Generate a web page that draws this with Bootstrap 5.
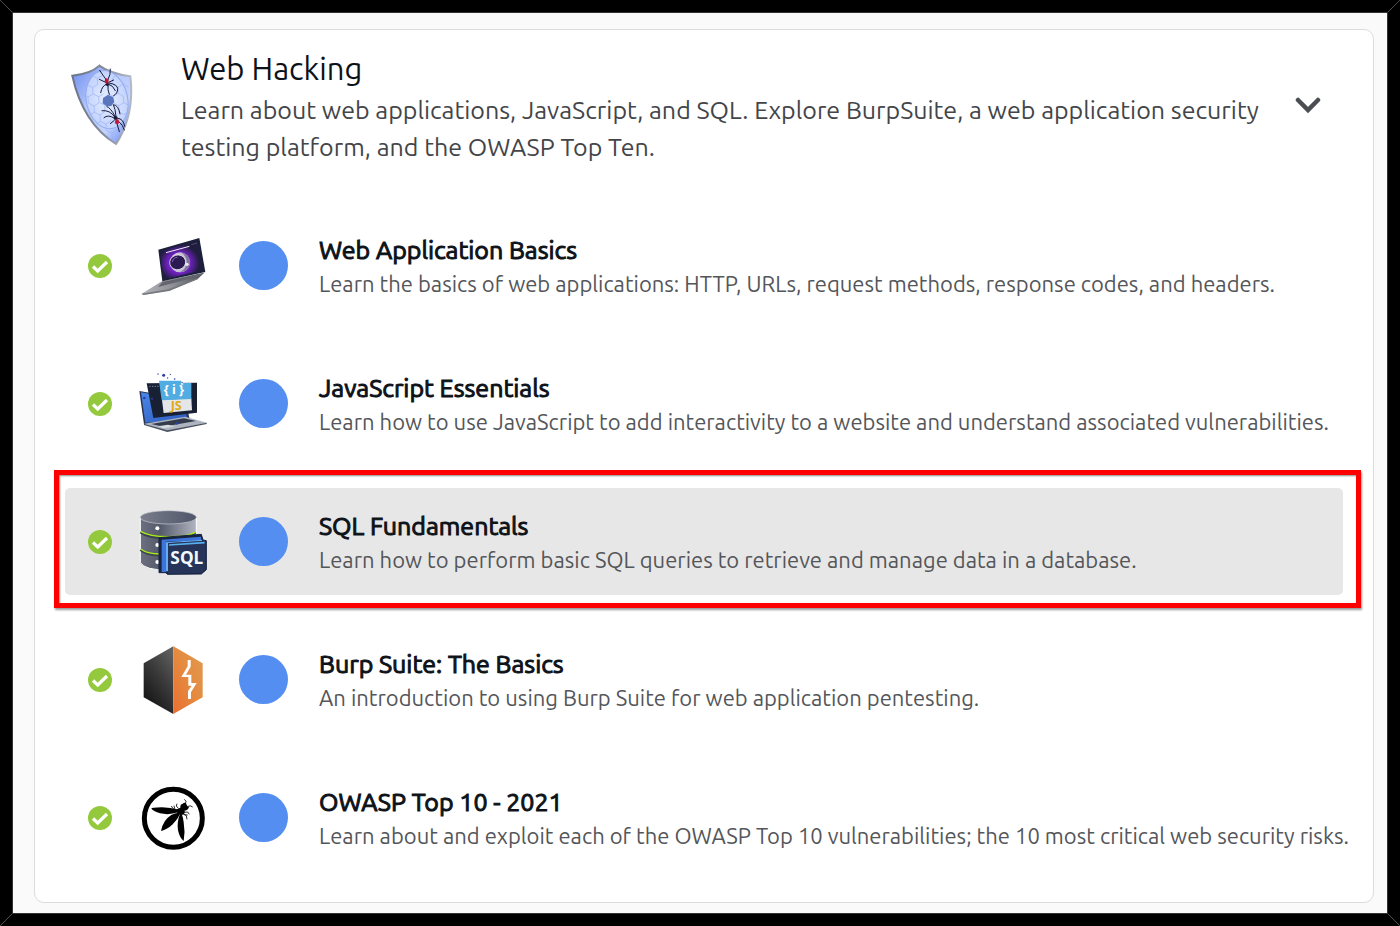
<!DOCTYPE html>
<html lang="en">
<head>
<meta charset="utf-8">
<meta name="viewport" content="width=device-width, initial-scale=1">
<title>Web Hacking</title>
<link href="https://cdn.jsdelivr.net/npm/bootstrap@5.3.0/dist/css/bootstrap.min.css" rel="stylesheet">
<style>
  body { font-family: Ubuntu, "Noto Sans", sans-serif; background: #000; color: #0d1218; }
  .frame {
    min-height: 100vh; padding: 13px;
    --edge: transparent 46%, #4a4a4a 50%, transparent 54%;
    background:
      linear-gradient(to top right, var(--edge)) 0 0 / 13px 13px no-repeat,
      linear-gradient(to top left, var(--edge)) 100% 0 / 13px 13px no-repeat,
      linear-gradient(to top left, var(--edge)) 0 100% / 13px 13px no-repeat,
      linear-gradient(to top right, var(--edge)) 100% 100% / 13px 13px no-repeat,
      #000;
  }
  .frame-page { background: #fafafa; padding: 16px 13px 10px 21px; box-shadow: 0 0 0 1px #333; }
  .module { border: 1px solid #dcdcdc; border-radius: 10px; background: #fff; padding-bottom: 18px; }
  .module-head { padding: 18px 52px 0 35px; }
  .module-shield { width: 64px; height: 82px; margin: 16px 47px 0 0; }
  .module-head h1 { font-size: 31px; line-height: 42px; font-weight: 400; }
  .module-head p { font-size: 25px; line-height: 37px; padding-top: 2px; color: #434549; }
  .toggle { margin: 46px 0 0 34px; line-height: 0; }
  .rooms { margin: 28px 12px 0 19px; }
  .room { border: 5px solid transparent; padding: 13px 0 8px 6px; }
  .room-picked { border-color: #f00; padding-right: 13px; box-shadow: 1px 2px 2px #0006, inset 1px 1px 2px #0007; }
  .room-link { min-height: 107px; padding-left: 23px; border-radius: 5px; color: inherit; }
  .room-link:hover { color: inherit; }
  .room-picked .room-link { background: #e7e7e7; }
  .tick { width: 24px; height: 24px; margin-right: 27px; }
  .room-art { width: 68px; height: 68px; margin-right: 32px; }
  .dot { width: 49px; height: 49px; margin-right: 31px; background: #548ef0; }
  .room-text { padding-top: 2px; }
  .room h2 { font-size: 25px; line-height: 34px; font-weight: 400; -webkit-text-stroke: 1px; }
  .room p { font-size: 22px; line-height: 34px; color: #54565a; }
  svg text { font-family: "Noto Sans", sans-serif; font-weight: 700; }
</style>
</head>
<body>
<svg class="d-none" aria-hidden="true">
  <symbol id="tick" viewBox="0 0 24 24">
    <circle cx="12" cy="12" r="12" fill="#95c93d"/>
    <path d="M5 12.500l4.700 4.500L19 8" fill="none" stroke="#fff" stroke-width="3.200"/>
  </symbol>
</svg>
<div class="frame d-flex flex-column">
  <div class="frame-page flex-grow-1">
    <main class="module">
      <header class="module-head d-flex align-items-start">
        <svg class="module-shield flex-shrink-0" viewBox="30 27 192 246" aria-hidden="true">
          <defs>
            <linearGradient id="sh" x1="0" y1="0" x2="1" y2="1"><stop offset="0" stop-color="#6d8cf0"/><stop offset=".4" stop-color="#b4c8fb"/><stop offset=".7" stop-color="#c3d3fd"/><stop offset="1" stop-color="#5d7ff0"/></linearGradient>
            <radialGradient id="shc"><stop offset="0" stop-color="#e6eeff"/><stop offset="1" stop-color="#c3d3fc"/></radialGradient>
            <linearGradient id="rim"><stop offset="0" stop-color="#6c7488"/><stop offset=".55" stop-color="#858c9c"/><stop offset="1" stop-color="#b4b9c6"/></linearGradient>
          </defs>
          <path d="M37 62Q92 56 118 32Q150 56 211 64Q225 180 168 267Q68 204 37 62Z" fill="url(#sh)" stroke="url(#rim)" stroke-width="6"/>
          <ellipse cx="141" cy="134" rx="62" ry="88" transform="rotate(-12 141 134)" fill="url(#shc)" stroke="#92aaf0" stroke-width="3"/>
          <g fill="none" stroke="#9bb1f4" stroke-width="2">
            <path d="M96 62l16 8 1 18-15 10-17-9v-18zM98 98l1 19-15 9-17-8-1-18 15-11M99 117l17 8 1 18-15 10-17-9-1-18M116 125l14-8M102 153l1 19 17 8 14-10 1-19-16-8M120 180l1 19 17 8 15-10M103 172l-15 8M140 96l18-9 16 10 1 18-15 9-17-8M174 97l15-9 16 8M175 115l15 9 1 19-15 9-16-9-1-19M191 143l15 8M176 152l1 18 15 9 14-8M158 87l-1-18 15-9M112 70l14-8M138 207l1 19 17 8 15-9 1-18-15-9M121 199l-12 8M156 234l1 18"/>
          </g>
          <path d="M144 119l15 7 4 14-9 13-14 1-12-9 1-16z" fill="#5a77bd"/>
          <g fill="none" stroke="#171b38" stroke-width="3" stroke-linecap="round">
            <path d="M140 76Q128 60 119 46M143 76Q153 58 151 42M137 82l-19-9M146 82l15-7M139 88Q126 92 122 113M144 90Q142 105 148 118M147 88Q160 92 166 107M147 84Q172 88 173 101Q173 116 161 122"/>
            <path d="M165 187Q150 164 126 167M166 185Q150 156 141 155M168 184Q166 160 160 149Q176 151 180 177M164 190Q144 177 132 188M163 196l-12 10M170 202l8 28M174 197Q190 210 193 225M173 190Q190 190 194 214"/>
          </g>
          <circle cx="142" cy="88" r="5" fill="#171b38"/><ellipse cx="140" cy="78" rx="6" ry="8" fill="#bd1737"/>
          <circle cx="167" cy="189" r="6" fill="#171b38"/><ellipse cx="171" cy="200" rx="6" ry="8" fill="#c1173a"/>
        </svg>
        <div class="flex-grow-1">
          <h1 class="m-0">Web Hacking</h1>
          <p class="m-0">Learn about web applications, JavaScript, and SQL. Explore BurpSuite, a web application security testing platform, and the OWASP Top Ten.</p>
        </div>
        <button type="button" class="toggle btn border-0 p-0 flex-shrink-0" aria-label="Collapse module">
          <svg width="26" height="22" viewBox="0 0 26 22" aria-hidden="true"><path d="M3 6l10 10L23 6" fill="none" stroke="#4a4d52" stroke-width="4.500" stroke-linecap="round"/></svg>
        </button>
      </header>

      <ul class="rooms list-unstyled mb-0">
        <li class="room">
          <a href="#" class="room-link d-flex align-items-center text-decoration-none">
            <svg class="tick flex-shrink-0" role="img" aria-label="Completed"><use href="#tick"/></svg>
            <svg class="room-art flex-shrink-0" viewBox="27 15 204 204" aria-hidden="true">
              <defs>
                <radialGradient id="glow" cx=".44" cy=".58" r=".55"><stop offset="0" stop-color="#a24bff"/><stop offset=".5" stop-color="#6a20b8"/><stop offset=".85" stop-color="#201d3f"/></radialGradient>
                <linearGradient id="kb"><stop offset="0" stop-color="#b5b6ba"/><stop offset=".5" stop-color="#8e9096"/><stop offset="1" stop-color="#4d4f5c"/></linearGradient>
              </defs>
              <path d="M97 162L223 137L203 156L118 190L40 204L35 200Z" fill="url(#kb)"/>
              <path d="M98 165L220 139L208 148L84 180Z" fill="#62646e"/>
              <path d="M35 200L115 187L203 153L203 157L118 192L40 204Z" fill="#77787d"/>
              <path d="M85 68L208 33L226 135L97 163Z" fill="#1b2039"/>
              <path d="M90 73L203 40L220 130L101 157Z" fill="url(#glow)"/>
              <path d="M108 77L178 58" stroke="#f1eaff" stroke-width="3"/><path d="M184 53l17-5" stroke="#5b5f80" stroke-width="2"/>
              <circle cx="150" cy="106" r="30" fill="#c9bfd9"/>
              <path d="M153 76Q181 82 180 110Q176 132 150 136Q170 125 170 105Q169 86 153 76" fill="#817598"/>
              <ellipse cx="143" cy="106" rx="24" ry="22" fill="#2b1a51" stroke="#fff" stroke-width="2" transform="rotate(-15 143 106)"/>
              <path d="M127 105Q130 91 142 91" fill="none" stroke="#8a60c4" stroke-width="3"/><circle cx="171" cy="112" r="5" fill="#eee8f4"/>
            </svg>
            <span class="dot rounded-circle flex-shrink-0"></span>
            <div class="room-text"><h2 class="m-0">Web Application Basics</h2><p class="m-0">Learn the basics of web applications: HTTP, URLs, request methods, response codes, and headers.</p></div>
          </a>
        </li>

        <li class="room">
          <a href="#" class="room-link d-flex align-items-center text-decoration-none">
            <svg class="tick flex-shrink-0" role="img" aria-label="Completed"><use href="#tick"/></svg>
            <svg class="room-art flex-shrink-0" viewBox="27 18 204 204" aria-hidden="true">
              <defs><linearGradient id="scr" x1="0" y1="0" x2="1" y2="1"><stop offset="0" stop-color="#4a86e8"/><stop offset="1" stop-color="#2c5bbd"/></linearGradient></defs>
              <path d="M28 81L165 105L180 170L42 181Z" fill="#28344f"/>
              <path d="M33 85L160 108L172 166L46 176Z" fill="url(#scr)"/>
              <path d="M42 179L166 158L230 176L112 200Z" fill="#aeb4c0"/>
              <path d="M64 180L162 163L198 171L100 188Z" fill="#343b4d"/>
              <path d="M84 187l30-5 20 5-32 6z" fill="#d7dbe2"/>
              <path d="M42 179L112 199L230 176V180L112 204L42 183Z" fill="#4b5261"/>
              <path d="M50 58L201 56V146L70 162Z" fill="#182033"/>
              <path d="M58 67h4M66 67h4M74 67h4M82 67h4" stroke="#7186a6" stroke-width="3"/>
              <path d="M87 50H153L164 62V104L95 109Z" fill="#51ade1"/>
              <path d="M153 50l11 12h-11z" fill="#dcecf6"/>
              <path d="M96 108L184 103L186 139L101 147Z" fill="#e5e6e8"/>
              <path d="M160 57h24v48l-88 4V104h64z" fill="#51ade1"/>
              <text x="101" y="90" font-size="38" fill="#fff">{ i }</text>
              <text x="122" y="138" font-size="38" fill="#deaa16">JS</text>
              <g fill="#2542a5"><circle cx="101" cy="34" r="4.500"/><circle cx="84" cy="30" r="2"/><circle cx="121" cy="31" r="2"/><circle cx="134" cy="45" r="2.500"/><circle cx="113" cy="42" r="2"/><circle cx="43" cy="102" r="4"/><circle cx="66" cy="104" r="3"/><circle cx="141" cy="178" r="4"/><circle cx="156" cy="55" r="2"/></g>
            </svg>
            <span class="dot rounded-circle flex-shrink-0"></span>
            <div class="room-text"><h2 class="m-0">JavaScript Essentials</h2><p class="m-0">Learn how to use JavaScript to add interactivity to a website and understand associated vulnerabilities.</p></div>
          </a>
        </li>

        <li class="room room-picked">
          <a href="#" class="room-link d-flex align-items-center text-decoration-none">
            <svg class="tick flex-shrink-0" role="img" aria-label="Completed"><use href="#tick"/></svg>
            <svg class="room-art flex-shrink-0" viewBox="27 21 204 204" aria-hidden="true">
              <defs>
                <linearGradient id="cyl"><stop offset="0" stop-color="#6c7080"/><stop offset=".35" stop-color="#555a6b"/><stop offset="1" stop-color="#b2b5c0"/></linearGradient>
                <linearGradient id="lid"><stop offset="0" stop-color="#797d8c"/><stop offset="1" stop-color="#50566a"/></linearGradient>
              </defs>
              <path d="M31 49V185Q45 208 115 207Q185 206 199 180V49Z" fill="url(#cyl)" stroke="#fff" stroke-width="3"/>
              <ellipse cx="115" cy="49" rx="84" ry="20" fill="url(#lid)" stroke="#c9cbd3" stroke-width="2"/>
              <path d="M31 94Q55 112 115 112Q175 112 197 96" fill="none" stroke="#3d424f" stroke-width="6"/>
              <path d="M31 147Q50 163 90 163" fill="none" stroke="#3d424f" stroke-width="6"/>
              <path d="M32 91Q58 107 115 107Q175 107 196 94M32 144Q50 158 90 159" fill="none" stroke="#a7ec16" stroke-width="4"/>
              <g fill="#fff"><circle cx="82" cy="82" r="6"/><circle cx="82" cy="132" r="6"/><circle cx="82" cy="183" r="6"/></g>
              <path d="M87 110L214 100L219 117L229 119V206L214 219L112 220L108 215H87Z" fill="#182541" stroke="#182541" stroke-width="3"/>
              <path d="M95 116L213 107V118L108 122V213H95Z" fill="#3c74da"/>
              <path d="M108 124L216 116V121L114 127V211H108Z" fill="#63aef5"/>
              <path d="M114 126L227 119V205L213 216L114 218Z" fill="#26345a"/>
              <path d="M117 132L224 125" stroke="#58b1ee" stroke-width="5"/>
              <text x="121" y="190" font-size="52" fill="#f0f9ff">SQL</text>
            </svg>
            <span class="dot rounded-circle flex-shrink-0"></span>
            <div class="room-text"><h2 class="m-0">SQL Fundamentals</h2><p class="m-0">Learn how to perform basic SQL queries to retrieve and manage data in a database.</p></div>
          </a>
        </li>

        <li class="room">
          <a href="#" class="room-link d-flex align-items-center text-decoration-none">
            <svg class="tick flex-shrink-0" role="img" aria-label="Completed"><use href="#tick"/></svg>
            <svg class="room-art flex-shrink-0" viewBox="27 21 204 204" aria-hidden="true">
              <defs>
                <linearGradient id="bd" x1="1" y1="0" x2=".4" y2="1"><stop offset="0" stop-color="#666"/><stop offset=".5" stop-color="#3c3c3c"/><stop offset="1" stop-color="#161616"/></linearGradient>
                <linearGradient id="bo" x1="1" y1="0" x2="0" y2="1"><stop offset="0" stop-color="#de9c52"/><stop offset=".5" stop-color="#e58a3f"/><stop offset="1" stop-color="#ea6e30"/></linearGradient>
              </defs>
              <path d="M130 22L41 73V175L130 225Z" fill="url(#bd)"/>
              <path d="M130 22L218 73V175L130 225Z" fill="url(#bo)"/>
              <path d="M173 63H182V83L168 107H184V132H200L183 160V180H174V156L185 140H175V114H154L173 82Z" fill="#fff"/>
            </svg>
            <span class="dot rounded-circle flex-shrink-0"></span>
            <div class="room-text"><h2 class="m-0">Burp Suite: The Basics</h2><p class="m-0">An introduction to using Burp Suite for web application pentesting.</p></div>
          </a>
        </li>

        <li class="room">
          <a href="#" class="room-link d-flex align-items-center text-decoration-none">
            <svg class="tick flex-shrink-0" role="img" aria-label="Completed"><use href="#tick"/></svg>
            <svg class="room-art flex-shrink-0" viewBox="27 17 204 204" aria-hidden="true">
              <circle cx="130" cy="120" r="87" fill="#fff" stroke="#000" stroke-width="15"/>
              <path d="M144 94Q110 82 64 89Q66 98 90 105Q118 111 144 102Z"/>
              <path d="M146 103Q122 104 105 128Q95 143 93 158Q112 154 128 138Q144 122 150 107Z"/>
              <path d="M150 106Q140 132 144 156Q149 179 161 188Q166 160 161 132Q159 116 155 106Z"/>
              <path d="M140 93L151 88Q150 78 158 76Q164 71 168 75Q170 84 177 86Q175 95 164 97Q166 104 160 109Q146 110 140 102Z"/>
              <path d="M166 76q6-8-3-13M174 84q7-4 14 2M145 90l-6-7 2-7M140 94l-11-3-5-8M134 91l-2-9M161 102l12-1 5 7M160 107l9 5 2 11M163 109l10 1" fill="none" stroke="#000" stroke-width="2.500"/>
            </svg>
            <span class="dot rounded-circle flex-shrink-0"></span>
            <div class="room-text"><h2 class="m-0">OWASP Top 10 - 2021</h2><p class="m-0">Learn about and exploit each of the OWASP Top 10 vulnerabilities; the 10 most critical web security risks.</p></div>
          </a>
        </li>
      </ul>
    </main>
  </div>
</div>
<script src="https://cdn.jsdelivr.net/npm/bootstrap@5.3.0/dist/js/bootstrap.bundle.min.js"></script>
</body>
</html>
